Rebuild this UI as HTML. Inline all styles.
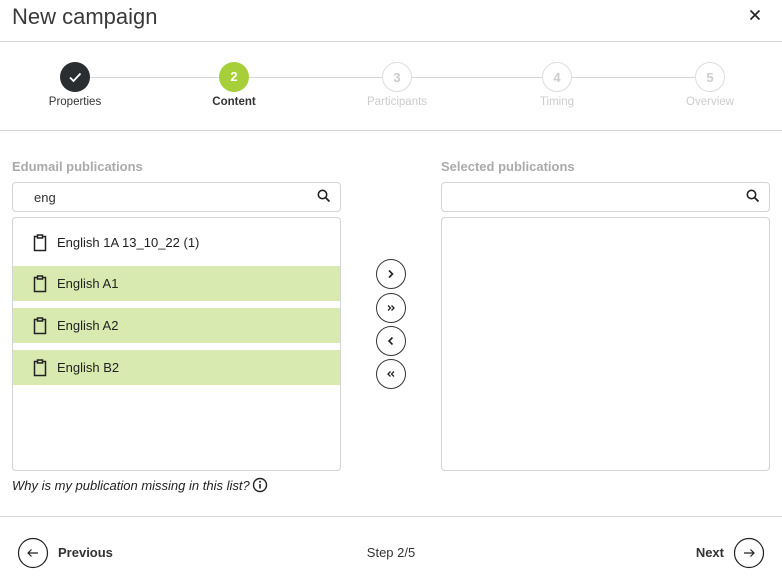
<!DOCTYPE html>
<html><head><meta charset="utf-8"><style>
*{box-sizing:border-box;margin:0;padding:0}
body{width:782px;height:583px;background:#fff;font-family:"Liberation Sans",sans-serif;color:#333;position:relative;overflow:hidden}
.a{position:absolute}
.hr{position:absolute;left:0;width:782px;height:1px;background:#d6d6d6}
.c{position:absolute;width:30px;height:30px;border-radius:50%;text-align:center;line-height:30px;font-size:13px;font-weight:bold}
.lbl{position:absolute;font-size:11.5px;width:100px;text-align:center;top:96px}
.box{position:absolute;border:1px solid #d4d4d4;border-radius:4px;background:#fff}
.item{position:absolute;left:13px;width:327px;height:35px;font-size:13px;line-height:35px;padding-left:44px;color:#222}
.hl{background:#d9eab0}
.item svg{position:absolute;left:20px;top:9px}
.btn{position:absolute;left:376px;width:30px;height:30px;border:1px solid #333;border-radius:50%}
.btn svg{position:absolute;left:0;top:0}
</style></head><body>
<div class="a" style="left:12px;top:4px;font-size:22px;color:#3a3a3a">New campaign</div>
<svg class="a" style="left:749px;top:9px" width="12" height="12"><path d="M1.5 1.5L10.5 10.5M10.5 1.5L1.5 10.5" stroke="#222" stroke-width="1.7"/></svg>
<div class="hr" style="top:41px"></div>

<div class="a" style="left:90px;top:77px;width:605px;height:1px;background:#d6d6d6"></div>
<div class="c" style="left:60px;top:62px;background:#2b2e31"><svg width="30" height="30"><path d="M10 15.5l3.5 3.5 7-7.5" fill="none" stroke="#fff" stroke-width="1.8"/></svg></div>
<div class="c" style="left:219px;top:62px;background:#a6cf3a;color:#fff">2</div>
<div class="c" style="left:382px;top:62px;background:#fff;border:1px solid #ddd;color:#ccc">3</div>
<div class="c" style="left:542px;top:62px;background:#fff;border:1px solid #ddd;color:#ccc">4</div>
<div class="c" style="left:695px;top:62px;background:#fff;border:1px solid #ddd;color:#ccc">5</div>
<div class="lbl" style="left:25px">Properties</div>
<div class="lbl" style="left:184px;font-weight:bold">Content</div>
<div class="lbl" style="left:347px;color:#ccc">Participants</div>
<div class="lbl" style="left:507px;color:#ccc">Timing</div>
<div class="lbl" style="left:660px;color:#ccc">Overview</div>
<div class="hr" style="top:130px"></div>

<div class="a" style="left:12px;top:159px;font-size:13px;font-weight:bold;color:#aaa">Edumail publications</div>
<div class="box" style="left:12px;top:182px;width:329px;height:30px"><span class="a" style="left:21px;top:7px;font-size:13px">eng</span>
<svg class="a" style="left:304px;top:6px" width="14" height="14"><circle cx="5.5" cy="5.5" r="4.2" fill="none" stroke="#222" stroke-width="1.6"/><path d="M8.6 8.6L12.5 12.5" stroke="#222" stroke-width="1.8"/></svg></div>
<div class="box" style="left:12px;top:217px;width:329px;height:254px"></div>
<div class="item" style="top:225px">English 1A 13_10_22 (1)<svg width="14" height="18"><path d="M4 2.5H1.5V16.5H12.5V2.5H10M4.5 1H9.5V4H4.5Z" fill="none" stroke="#222" stroke-width="1.5"/></svg></div>
<div class="item hl" style="top:266px">English A1<svg width="14" height="18"><path d="M4 2.5H1.5V16.5H12.5V2.5H10M4.5 1H9.5V4H4.5Z" fill="none" stroke="#222" stroke-width="1.5"/></svg></div>
<div class="item hl" style="top:308px">English A2<svg width="14" height="18"><path d="M4 2.5H1.5V16.5H12.5V2.5H10M4.5 1H9.5V4H4.5Z" fill="none" stroke="#222" stroke-width="1.5"/></svg></div>
<div class="item hl" style="top:350px">English B2<svg width="14" height="18"><path d="M4 2.5H1.5V16.5H12.5V2.5H10M4.5 1H9.5V4H4.5Z" fill="none" stroke="#222" stroke-width="1.5"/></svg></div>

<div class="btn" style="top:259px"><svg width="28" height="28"><path d="M12 10.5l3.5 3.5-3.5 3.5" fill="none" stroke="#222" stroke-width="1.6"/></svg></div>
<div class="btn" style="top:293px"><svg width="28" height="28"><path d="M11 11.5l2.5 2.5-2.5 2.5M14.5 11.5l2.5 2.5-2.5 2.5" fill="none" stroke="#222" stroke-width="1.3"/></svg></div>
<div class="btn" style="top:326px"><svg width="28" height="28"><path d="M15.5 10.5l-3.5 3.5 3.5 3.5" fill="none" stroke="#222" stroke-width="1.6"/></svg></div>
<div class="btn" style="top:359px"><svg width="28" height="28"><path d="M13.5 11.5l-2.5 2.5 2.5 2.5M17 11.5l-2.5 2.5 2.5 2.5" fill="none" stroke="#222" stroke-width="1.3"/></svg></div>

<div class="a" style="left:441px;top:159px;font-size:13px;font-weight:bold;color:#aaa">Selected publications</div>
<div class="box" style="left:441px;top:182px;width:329px;height:30px">
<svg class="a" style="left:304px;top:6px" width="14" height="14"><circle cx="5.5" cy="5.5" r="4.2" fill="none" stroke="#222" stroke-width="1.6"/><path d="M8.6 8.6L12.5 12.5" stroke="#222" stroke-width="1.8"/></svg></div>
<div class="box" style="left:441px;top:217px;width:329px;height:254px"></div>

<div class="a" style="left:12px;top:478px;font-size:13px;font-style:italic;color:#222">Why is my publication missing in this list?</div>
<svg class="a" style="left:252px;top:477px" width="16" height="16"><circle cx="8" cy="8" r="6.5" fill="none" stroke="#222" stroke-width="1.4"/><path d="M8 7v4.5" stroke="#222" stroke-width="1.6"/><circle cx="8" cy="4.8" r="1" fill="#222"/></svg>
<div class="hr" style="top:516px"></div>

<svg class="a" style="left:17px;top:537px" width="32" height="32"><circle cx="16" cy="16" r="14.5" fill="none" stroke="#222" stroke-width="1.2"/><path d="M21 16H11M14.5 12.5L11 16l3.5 3.5" fill="none" stroke="#222" stroke-width="1.2"/></svg>
<div class="a" style="left:58px;top:545px;font-size:13px;font-weight:bold">Previous</div>
<div class="a" style="left:341px;top:545px;width:100px;text-align:center;font-size:13px">Step 2/5</div>
<div class="a" style="left:624px;top:545px;width:100px;text-align:right;font-size:13px;font-weight:bold">Next</div>
<svg class="a" style="left:733px;top:537px" width="32" height="32"><circle cx="16" cy="16" r="14.5" fill="none" stroke="#222" stroke-width="1.2"/><path d="M11 16H21M17.5 12.5L21 16l-3.5 3.5" fill="none" stroke="#222" stroke-width="1.2"/></svg>
</body></html>
